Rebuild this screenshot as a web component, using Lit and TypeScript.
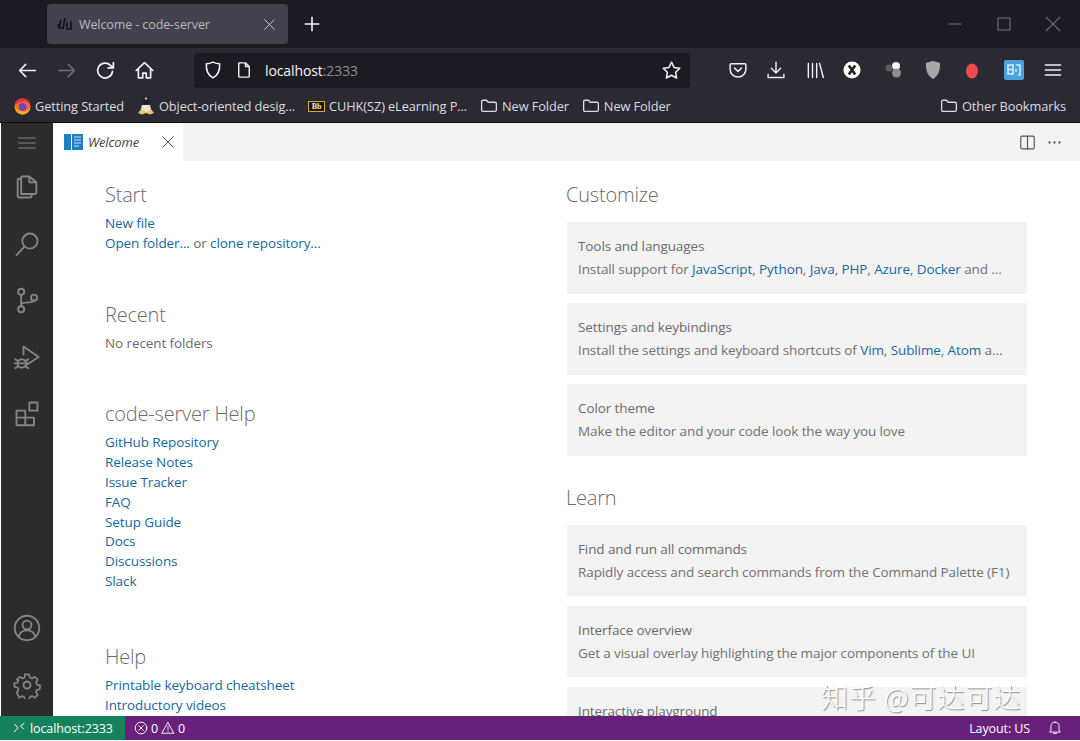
import { LitElement, html, css, svg } from "lit";
import { customElement } from "lit/decorators.js";

const ico = (w: number, body: unknown, box = 24) =>
  html`<svg class="ico" width=${w} height=${w} viewBox="0 0 ${box} ${box}" fill="none" stroke="currentColor" stroke-width="1.6" stroke-linecap="round" stroke-linejoin="round">${body}</svg>`;

const folder = ico(18, svg`<path d="M2 5.5C2 4.4 2.8 4 3.6 4H8l2 2.4h8.4c.9 0 1.6.7 1.6 1.6v8c0 1-.7 1.6-1.6 1.6H3.6c-.9 0-1.6-.6-1.6-1.6z" transform="translate(0 0)"/>`, 22);

const firefox = html`<svg class="ico" width="17" height="17" viewBox="0 0 17 17">
  <circle cx="8.5" cy="8.5" r="8" fill="#f2702a" />
  <path d="M1 6C2 2 6 .4 9 .6c3 .2 6 2.4 7 5 .6 2-.6 1-2-.6C12 3 8 3 5 4.6 3 5.6 1.4 7.4 1 6z" fill="#e8313f" />
  <circle cx="8.6" cy="8.8" r="3.9" fill="#7b3fc4" />
  <path d="M.6 9c.6 4 4 7.4 8 7.4 4.6 0 7.4-3.6 7.8-7.4-1.6 3-4 5-7.4 4.6C6 13.2 3.2 12 .6 9z" fill="#f9b21c" />
</svg>`;

const tux = html`<svg class="ico" width="18" height="18" viewBox="0 0 18 18">
  <path d="M1 16l4-5h8l4 5-4 1.4-4-1.4-4 1.400z" fill="#f1c75a" />
  <path d="M5 8h8l1 4-5 3-5-3z" fill="#e9e4d2" />
  <circle cx="9" cy="4.500" r="3" fill="#1b1a1f" />
  <circle cx="9" cy="1.600" r="1.200" fill="#c9c3ab" />
</svg>`;

const bb = html`<span class="bb">Bb</span>`;

const docIcon = svg`<path d="M14 3H8a1 1 0 0 0-1 1v1H5a1 1 0 0 0-1 1v14a1 1 0 0 0 1 1h10a1 1 0 0 0 1-1v-2h3a1 1 0 0 0 1-1V8z M14 3v5h6 M7 5v13h9"/>`;
const searchIcon = svg`<circle cx="14.500" cy="9.500" r="6.500"/><path d="M9.800 14.200L3 21.500"/>`;
const gitIcon = svg`<circle cx="7" cy="5" r="2.600"/><circle cx="7" cy="20" r="2.600"/><circle cx="18" cy="10" r="2.600"/><path d="M7 7.600v9.800M7 16c0-3 11-1 11-3.400"/>`;
const debugIcon = svg`<path d="M9 10V3l13 9-11 7"/><circle cx="7.500" cy="17.500" r="3.600"/><path d="M2 14l2.500 1.500M13 14l-2.500 1.500M2 21.500l2.500-1.500M13 21.500l-2.500-1.500M1.500 17.500h2.400M11 17.500h2.400M4.500 17.500h6"/>`;
const extIcon = svg`<path d="M3 10h7.500v6H3zM3 16h7.500v6.500H3zM10.500 16H18v6.500h-7.500zM10.500 10v6M14 3h7v7h-7z"/>`;
const userIcon = svg`<circle cx="12" cy="12" r="10.500"/><circle cx="12" cy="9.500" r="3.800"/><path d="M5 19c1-3.500 3.500-5 7-5s6 1.500 7 5"/>`;
const gearIcon = svg`<circle cx="12" cy="12" r="3"/><path d="M10 2h4l.6 3 2.100.9 2.600-1.700 2.800 2.800-1.700 2.600.9 2.100 3 .6v0l-.3 3.700-2.700.6-.9 2.100 1.700 2.600-2.800 2.800-2.600-1.700-2.100.9-.6 2.700h-4l-.6-2.700-2.100-.9-2.600 1.700L2.300 19l1.700-2.600-.9-2.100-3-.6v-3.400l3-.6.9-2.100L2.300 7l2.800-2.800 2.600 1.700 2.100-.9z" transform="translate(1.100 1.100) scale(.91)"/>`;

@customElement("app-root")
export class AppRoot extends LitElement {
  static styles = css`
    :host {
      display: flex;
      flex-direction: column;
      width: 1080px;
      height: 741px;
      overflow: hidden;
      background: #fff;
      position: relative;
      font-family: "Open Sans", "Noto Sans", sans-serif;
      letter-spacing: -0.1px;
    }
    .ico { display: block; flex: none; }

    .titlebar {
      height: 48px;
      flex: none;
      background: #1c1b22;
      display: flex;
      align-items: center;
      padding-left: 47px;
      padding-bottom: 0;
      color: #fbfbfe;
    }
    .tab {
      width: 241px;
      height: 40px;
      box-sizing: border-box;
      background: #42414d;
      border-radius: 4px;
      display: flex;
      align-items: center;
      padding: 0 12px 0 10px;
      font-size: 12.500px;
      color: #b9b8bf;
      gap: 6px;
    }
    .tab span { flex: 1; }
    .tab .ico { color: #d6d5da; }
    .plus { margin-left: 15px; color: #fbfbfe; }
    .winctl { margin-left: auto; display: flex; gap: 33px; margin-right: 19px; color: #77767c; }

    .toolbar {
      height: 44px;
      flex: none;
      background: #2b2a33;
      display: flex;
      align-items: center;
      color: #f0f0f4;
      padding-left: 17px;
      box-sizing: border-box;
    }
    .nav { display: flex; gap: 18px; width: 177px; }
    .urlbar {
      width: 496px;
      height: 35px;
      background: #1c1b22;
      border-radius: 4px;
      display: flex;
      align-items: center;
      padding: 0 8px 0 9px;
      box-sizing: border-box;
      gap: 12px;
      font-size: 14px;
    }
    .urlbar .url { flex: 1; color: #f4f4f6; }
    .urlbar .url i { font-style: normal; color: #8f8e96; }
    .tools { display: flex; align-items: center; margin-left: 39px; gap: 19px; }

    .bookmarks {
      height: 31px;
      flex: none;
      box-sizing: border-box;
      background: #2b2a33;
      border-bottom: 1px solid #0c0c0f;
      display: flex;
      align-items: center;
      padding: 0 14px 2px 14px;
      color: #dcdce0;
      font-size: 12.800px;
    }
    .bm { display: flex; align-items: center; gap: 4px; margin-right: 13px; white-space: nowrap; }
    .bm.last { margin-left: auto; margin-right: 0; }
    .bb {
      width: 17px; height: 11px; box-sizing: border-box;
      background: #20150a; border: 1px solid #d9a441; color: #f2e6c9;
      font: bold 8px/9px "Liberation Serif", serif; text-align: center; letter-spacing: 0;
    }

    .workbench { flex: 1; min-height: 0; display: flex; margin-left: 1px; }
    .activity {
      width: 52px; flex: none; background: #2c2c2c; color: #858585;
      display: flex; flex-direction: column; align-items: center;
    }
    .activity .menu { height: 39px; display: flex; align-items: center; }
    .activity .top { display: flex; flex-direction: column; gap: 28.500px; margin-top: 11px; }
    .activity .bottom { margin-top: auto; display: flex; flex-direction: column; gap: 29px; margin-bottom: 17px; }

    .editor { flex: 1; min-width: 0; display: flex; flex-direction: column; }
    .tabsbar {
      height: 38px; flex: none; background: #f3f3f3; display: flex; align-items: stretch; color: #424242;
    }
    .etab {
      width: 130px; background: #fff; display: flex; align-items: center; box-sizing: border-box;
      padding-left: 11px; gap: 5px; font-size: 13px; font-style: italic; color: #444;
    }
    .etab span { width: 68px; }
    .actions { margin-left: auto; display: flex; align-items: center; gap: 10px; margin-right: 17px; color: #555; }

    .welcome {
      flex: 1; min-height: 0; overflow: hidden; display: grid;
      grid-template-columns: 462px 460px; padding-left: 52px; padding-top: 19px; font-size: 13.500px; line-height: 19.800px;
      color: #6c6c6c; background: #fff; margin-right: 0;
    }
    h2 {
      margin: 0; font-size: 20px; font-weight: 300; color: #6b6b6b; line-height: 30px; letter-spacing: -0.2px;
    }
    a { color: #16689e; text-decoration: none; }
    .sec { margin-bottom: 46px; }
    .sec.help { margin-bottom: 50px; }
    .sec h2 { margin-bottom: 4px; }
    .link { display: block; }
    .right h2 { margin-left: -1px; }
    .card {
      background: #f3f3f3; height: 71.500px; box-sizing: border-box; padding: 13px 11px 0; margin-bottom: 9.500px;
      white-space: nowrap; overflow: hidden; color: #717171; line-height: 23px;
    }
    .card div:first-child { color: #6a6a6a; }
    .right h2.c { margin-bottom: 12px; }
    .right h2.l { margin-top: 27px; margin-bottom: 12px; }

    .status {
      height: 24px; flex: none; background: #68217a; color: #fff; display: flex; align-items: center; font-size: 12.500px;
      margin-bottom: 1px;
    }
    .remote {
      width: 125px; height: 100%; background: #16825d; display: flex; align-items: center; box-sizing: border-box; padding-left: 13px; gap: 5px;
    }
    .problems { display: flex; align-items: center; gap: 3px; margin-left: 9px; }
    .layout { margin-left: auto; margin-right: 18px; }
    .bell { margin-right: 18px; }

    .mark {
      position: absolute; left: 821px; top: 679px; font-size: 27px; line-height: 36px; color: #fff; letter-spacing: 1px;
      font-family: "Noto Sans CJK SC", sans-serif; font-weight: 300;
      text-shadow: 1px 1px 1px #8a8a8a; white-space: nowrap;
    }
  `;

  render() {
    const links = (xs: string[]) => xs.map((x) => html`<a class="link" href="#">${x}</a>`);
    return html`
      <div class="titlebar">
        <div class="tab">
          <svg class="ico" width="16" height="14" viewBox="0 0 16 14" fill="none" stroke="#14131a" stroke-width="1.600">
            <path d="M0 9l4-2M4 3l-2 8h4M8 1L6 12M10 5v7h4V4" />
          </svg>
          <span>Welcome - code-server</span>
          ${ico(13, svg`<path d="M3 3l18 18M21 3L3 21"/>`)}
        </div>
        <div class="plus">${ico(18, svg`<path d="M12 3v18M3 12h18" stroke-width="2"/>`)}</div>
        <div class="winctl">
          ${ico(16, svg`<path d="M3 12h18"/>`)}
          ${ico(16, svg`<rect x="3" y="3" width="18" height="18" stroke-linecap="butt"/>`)}
          ${ico(16, svg`<path d="M2 2l20 20M22 2L2 22"/>`)}
        </div>
      </div>

      <div class="toolbar">
        <div class="nav">
          ${ico(21, svg`<path d="M21 12H3M10 5l-7 7 7 7" stroke-width="1.800"/>`)}
          <span style="color:#6f6e77">${ico(21, svg`<path d="M3 12h18M14 5l7 7-7 7" stroke-width="1.800"/>`)}</span>
          ${ico(21, svg`<path d="M20 13a8.500 8.500 0 1 1-2.500-7L21 9M21 3v6h-6" stroke-width="2"/>`)}
          ${ico(21, svg`<path d="M2.500 12L12 3l9.500 9M5 10v10.500h5V15h4v5.500h5V10" stroke-width="1.900"/>`)}
        </div>
        <div class="urlbar">
          ${ico(20, svg`<path d="M12 2.500c3 1.500 5.500 2 8 2 .5 9-2.500 14-8 17-5.500-3-8.500-8-8-17 2.500 0 5-.5 8-2z" stroke-width="1.900"/>`)}
          ${ico(18, svg`<path d="M5 2.500h9l5 5V20a1.500 1.500 0 0 1-1.500 1.500h-11A1.500 1.500 0 0 1 5 20z M14 2.500v5h5" stroke-width="1.900"/>`)}
          <span class="url">localhost<i>:2333</i></span>
          ${ico(21, svg`<path d="M12 2.500l2.900 6 6.600.9-4.800 4.600 1.200 6.600-5.900-3.200-5.900 3.200 1.200-6.600L2.500 9.400l6.600-.9z" stroke-width="1.700"/>`)}
        </div>
        <div class="tools">
          ${ico(18, svg`<path d="M3 3.500h18a1.500 1.500 0 0 1 1.500 1.500v6a10.500 10.500 0 0 1-21 0V5A1.500 1.500 0 0 1 3 3.500zM7.500 9.500L12 14l4.500-4.500" stroke-width="2"/>`)}
          ${ico(20, svg`<path d="M12 2.500v13M6.500 10l5.500 5.500 5.500-5.500M2.500 17v4h19v-4" stroke-width="1.700"/>`)}
          ${ico(20, svg`<path d="M4 4v17M9 4v17M14 4v17M17.500 4l4.500 17" stroke-width="1.700"/>`)}
          <svg class="ico" width="18" height="18" viewBox="0 0 18 18" style="margin-left:-1px">
            <circle cx="9" cy="9" r="8.500" fill="#fff" />
            <path d="M5.800 4.500l6.400 9M12.200 4.500l-6.400 9" stroke="#222" stroke-width="2.600" />
          </svg>
          <svg class="ico" width="20" height="20" viewBox="0 0 20 20" style="margin-left:3px">
            <circle cx="13" cy="6" r="4" fill="#f3f3f3" /><circle cx="13.500" cy="13" r="4.500" fill="#8e8e8e" /><circle cx="6" cy="8" r="3.500" fill="#5d5d5d" />
          </svg>
          <svg class="ico" width="16" height="20" viewBox="0 0 16 20" style="margin-left:3px">
            <path d="M8 1c3 1 5 1 7 2 .4 8-2 13-7 16C3 16 .6 11 1 3c2-1 4-1 7-2z" fill="#a7a7a7" />
          </svg>
          <svg class="ico" width="14" height="18" viewBox="0 0 14 18" style="margin-left:5px">
            <ellipse cx="7" cy="10" rx="6" ry="7.500" fill="#ef4a4f" />
          </svg>
          <svg class="ico" width="20" height="20" viewBox="0 0 20 20" style="margin-left:6px">
            <rect width="20" height="20" rx="2" fill="#4aa3e0" />
            <path d="M4 5h5v9H4zM4 9.500h5M12 5h4v10h-2M12 9v3" fill="none" stroke="#d8effc" stroke-width="1.500" />
          </svg>
          ${ico(20, svg`<path d="M3 6h18M3 12h18M3 18h18" stroke-width="2"/>`)}
        </div>
      </div>

      <div class="bookmarks">
        <div class="bm">${firefox}Getting Started</div>
        <div class="bm">${tux}Object-oriented desig...</div>
        <div class="bm">${bb}CUHK(SZ) eLearning P...</div>
        <div class="bm">${folder}New Folder</div>
        <div class="bm">${folder}New Folder</div>
        <div class="bm last">${folder}Other Bookmarks</div>
      </div>

      <div class="workbench">
        <div class="activity">
          <div class="menu">${ico(20, svg`<path d="M2 6h20M2 12h20M2 18h20" stroke-width="1.300"/>`)}</div>
          <div class="top">
            ${ico(28, docIcon)} ${ico(28, searchIcon)} ${ico(28, gitIcon)} ${ico(28, debugIcon)} ${ico(28, extIcon)}
          </div>
          <div class="bottom">${ico(28, userIcon)} ${ico(28, gearIcon)}</div>
        </div>
        <div class="editor">
          <div class="tabsbar">
            <div class="etab">
              <svg class="ico" width="19" height="16" viewBox="0 0 19 16">
                <rect width="7" height="16" fill="#1f7fc4" />
                <rect x="8" width="11" height="16" fill="#1f7fc4" />
                <path d="M10 3h7M10 6h7M10 9h7M10 12h5" stroke="#cfe6f6" stroke-width="1" />
              </svg>
              <span>Welcome</span>
              ${ico(14, svg`<path d="M3 3l18 18M21 3L3 21"/>`)}
            </div>
            <div class="actions">
              ${ico(17, svg`<rect x="2.500" y="3" width="19" height="18" rx="2"/><path d="M12 3v18"/>`)}
              ${ico(17, svg`<circle cx="5" cy="12" r=".8"/><circle cx="12" cy="12" r=".8"/><circle cx="19" cy="12" r=".8"/>`)}
            </div>
          </div>
          <div class="welcome">
            <div>
              <div class="sec">
                <h2>Start</h2>
                <a class="link" href="#">New file</a>
                <div><a href="#">Open folder...</a> or <a href="#">clone repository...</a></div>
              </div>
              <div class="sec">
                <h2>Recent</h2>
                <div>No recent folders</div>
              </div>
              <div class="sec help">
                <h2>code-server Help</h2>
                ${links(["GitHub Repository", "Release Notes", "Issue Tracker", "FAQ", "Setup Guide", "Docs", "Discussions", "Slack"])}
              </div>
              <div class="sec">
                <h2>Help</h2>
                ${links(["Printable keyboard cheatsheet", "Introductory videos"])}
              </div>
            </div>
            <div class="right">
              <h2 class="c">Customize</h2>
              <div class="card">
                <div>Tools and languages</div>
                <div>Install support for <a href="#">JavaScript</a>, <a href="#">Python</a>, <a href="#">Java</a>, <a href="#">PHP</a>, <a href="#">Azure</a>, <a href="#">Docker</a> and ...</div>
              </div>
              <div class="card">
                <div>Settings and keybindings</div>
                <div>Install the settings and keyboard shortcuts of <a href="#">Vim</a>, <a href="#">Sublime</a>, <a href="#">Atom</a> a...</div>
              </div>
              <div class="card">
                <div>Color theme</div>
                <div>Make the editor and your code look the way you love</div>
              </div>
              <h2 class="l">Learn</h2>
              <div class="card">
                <div>Find and run all commands</div>
                <div>Rapidly access and search commands from the Command Palette (F1)</div>
              </div>
              <div class="card">
                <div>Interface overview</div>
                <div>Get a visual overlay highlighting the major components of the UI</div>
              </div>
              <div class="card">
                <div>Interactive playground</div>
                <div>Try essential editor features in a short walkthrough</div>
              </div>
            </div>
          </div>
        </div>
      </div>

      <div class="status">
        <div class="remote">
          ${ico(12, svg`<path d="M2 20l8-8-6-7M22 3l-7 5 6 6" stroke-width="2"/>`)}
          <span>localhost:2333</span>
        </div>
        <div class="problems">
          ${ico(14, svg`<circle cx="12" cy="12" r="10"/><path d="M8 8l8 8M16 8l-8 8"/>`)}
          <span>0</span>
          ${ico(14, svg`<path d="M12 3l10 18H2zM12 9v6M12 18v.5"/>`)}
          <span>0</span>
        </div>
        <div class="layout">Layout: US</div>
        <div class="bell">${ico(14, svg`<path d="M12 2c5 0 7 3 7 7v7l2 3H3l2-3V9c0-4 2-7 7-7zM9.500 21.500h5"/>`)}</div>
      </div>
      <div class="mark">知乎 @可达可达</div>
    `;
  }
}
